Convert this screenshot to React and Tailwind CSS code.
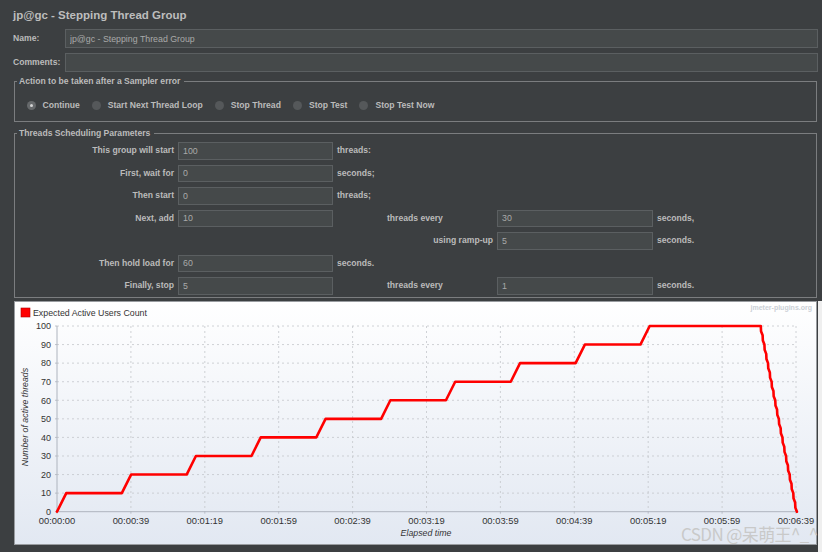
const label = "text-[8.6px] font-bold text-[#bbbbbb] whitespace-nowrap leading-none";

function Field({ value, h = "h-[17.5px]" }) {
  return (
    <input
      readOnly
      value={value}
      className={`block ${h} w-full min-w-0 bg-[#45494a] border border-[#5b5f61] px-[4px] text-[8.8px] text-[#a9a9a9] outline-none`}
    />
  );
}

function Radio({ text, checked }) {
  return (
    <div className="flex items-center gap-[7px]">
      <span
        className={`w-[9px] h-[9px] rounded-full flex items-center justify-center ${
          checked ? "bg-[#66696b]" : "bg-[#55585a]"
        }`}
      >
        {checked && <span className="w-[3px] h-[3px] rounded-full bg-[#d4d4d4]" />}
      </span>
      <span className={label}>{text}</span>
    </div>
  );
}

// chart scale (page coordinates, svg viewBox is aligned to the page)
const X0 = 57;
const X1 = 796;
const Y0 = 510.7;
const YT = 325;
const tx = (t) => X0 + (t * (X1 - X0)) / 399;
const vy = (v) => Y0 - (v * (Y0 - YT)) / 100;

const ticks = [
  "00:00:00", "00:00:39", "00:01:19", "00:01:59", "00:02:39", "00:03:19",
  "00:03:59", "00:04:39", "00:05:19", "00:05:59", "00:06:39",
];

function buildLine() {
  const pts = [[0, 0]];
  for (let k = 1; k <= 10; k++) {
    const s = 35 * (k - 1);
    pts.push([s + 5, 10 * k]);
    if (k < 10) pts.push([s + 35, 10 * k]);
  }
  pts.push([380, 100]);
  for (let i = 0; i < 20; i++) {
    const t = 380 + i * 0.975;
    const v = 100 - 5 * i;
    pts.push([t + 0.12, v - 2.8]);
    pts.push([t + 0.975, v - 5]);
  }
  return pts.map(([t, v]) => `${tx(t).toFixed(2)},${vy(v).toFixed(2)}`).join(" ");
}

function Chart() {
  const font = "Liberation Sans, Arial, sans-serif";
  return (
    <svg width="801" height="242" viewBox="15 301 801 242" className="block">
      <defs>
        <linearGradient id="bg" x1="0" y1="0" x2="0" y2="1">
          <stop offset="0" stopColor="#ffffff" />
          <stop offset="1" stopColor="#e2e8f2" />
        </linearGradient>
      </defs>
      <rect x="15" y="301" width="801" height="242" fill="url(#bg)" />

      {/* legend */}
      <rect x="21" y="307" width="9" height="9" fill="#ff0000" stroke="#b00000" strokeWidth="0.6" />
      <text x="33" y="315" fontSize="8.8" fill="#333" fontFamily={font}>Expected Active Users Count</text>
      <text x="812" y="308.5" fontSize="7" fontWeight="bold" fill="#cbd0d6" textAnchor="end" fontFamily={font}>
        jmeter-plugins.org
      </text>

      {/* grid */}
      {Array.from({ length: 10 }, (_, i) => (
        <line key={"h" + i} x1={X0} x2={X1} y1={vy((i + 1) * 10)} y2={vy((i + 1) * 10)} stroke="#c4c7cc" strokeWidth="0.8" strokeDasharray="2 3" />
      ))}
      {ticks.slice(1).map((_, i) => (
        <line key={"v" + i} x1={X0 + (i + 1) * 73.9} x2={X0 + (i + 1) * 73.9} y1={YT} y2={Y0} stroke="#c4c7cc" strokeWidth="0.8" strokeDasharray="2 3" />
      ))}

      {/* axes */}
      <line x1={X0} x2={X1} y1={Y0} y2={Y0} stroke="#aeb4be" strokeWidth="1" />
      <line x1={X0} x2={X0} y1={YT} y2={Y0} stroke="#aeb4be" strokeWidth="1" />
      {Array.from({ length: 11 }, (_, i) => (
        <g key={"y" + i}>
          <line x1={X0 - 2} x2={X0} y1={vy(i * 10)} y2={vy(i * 10)} stroke="#aeb4be" strokeWidth="0.8" />
          <text x="51" y={vy(i * 10) + 3.3} fontSize="9" fill="#333" textAnchor="end" fontFamily={font}>{i * 10}</text>
        </g>
      ))}
      {ticks.map((t, i) => (
        <g key={"x" + i}>
          <line x1={X0 + i * 73.9} x2={X0 + i * 73.9} y1={Y0} y2={Y0 + 2} stroke="#aeb4be" strokeWidth="0.8" />
          <text x={X0 + i * 73.9} y="522.5" fontSize="9.4" fill="#333" textAnchor="middle" fontFamily={font}>{t}</text>
        </g>
      ))}
      <text x="426" y="534.5" fontSize="8.8" fontStyle="italic" fill="#333" textAnchor="middle" fontFamily={font}>Elapsed time</text>
      <text x="0" y="0" fontSize="8.8" fontStyle="italic" fill="#333" textAnchor="middle" fontFamily={font} transform="translate(28 416) rotate(-90)">
        Number of active threads
      </text>

      <polyline points={buildLine()} fill="none" stroke="#ff0000" strokeWidth="2.6" strokeLinejoin="round" strokeLinecap="round" />
    </svg>
  );
}

export default function App() {
  return (
    <div className="relative w-[822px] h-[552px] overflow-hidden bg-[#3c3f41] flex flex-col font-['Liberation_Sans',Arial,sans-serif]">
      <div className="pl-[13px] pt-[8px] text-[11.5px] leading-[14px] font-bold text-[#bdbdbd]">
        jp@gc - Stepping Thread Group
      </div>

      <div className="flex items-center pl-[13px] pr-[4px] mt-[7px]">
        <span className={`${label} w-[52px]`}>Name:</span>
        <div className="flex-1">
          <Field value="jp@gc - Stepping Thread Group" h="h-[19px]" />
        </div>
      </div>
      <div className="flex items-center pl-[13px] pr-[4px] mt-[5px]">
        <span className={`${label} w-[52px]`}>Comments:</span>
        <div className="flex-1">
          <Field value="" h="h-[19px]" />
        </div>
      </div>

      {/* Action on sampler error */}
      <fieldset className="ml-[14px] mr-[5px] mt-[3px] border border-[#7b7d7f] pt-[12px] pb-[10px]">
        <legend className="ml-[2px] pl-[2px] pr-[4px] text-[8.6px] font-bold text-[#bbbbbb] leading-[12px]">
          Action to be taken after a Sampler error
        </legend>
        <div className="flex items-center h-[12px] gap-[12px] pl-[11.5px]">
          <Radio text="Continue" checked />
          <Radio text="Start Next Thread Loop" />
          <Radio text="Stop Thread" />
          <Radio text="Stop Test" />
          <Radio text="Stop Test Now" />
        </div>
      </fieldset>

      {/* Scheduling */}
      <fieldset className="ml-[14px] mr-[5px] mt-[5px] border border-[#7b7d7f] pt-[3px] pb-[2px]">
        <legend className="ml-[2px] pl-[2px] pr-[4px] text-[8.6px] font-bold text-[#bbbbbb] leading-[12px]">
          Threads Scheduling Parameters
        </legend>
        <div className="grid grid-cols-[159px_155px_46px_106px_156px_1fr] gap-x-[4px] gap-y-[5px] items-center">
          <span className={`${label} text-right`}>This group will start</span>
          <Field value="100" />
          <span className={label}>threads:</span>
          <div />
          <div />
          <div />

          <span className={`${label} text-right`}>First, wait for</span>
          <Field value="0" />
          <span className={label}>seconds;</span>
          <div />
          <div />
          <div />

          <span className={`${label} text-right`}>Then start</span>
          <Field value="0" />
          <span className={label}>threads;</span>
          <div />
          <div />
          <div />

          <span className={`${label} text-right`}>Next, add</span>
          <Field value="10" />
          <div />
          <span className={label}>threads every</span>
          <Field value="30" />
          <span className={label}>seconds,</span>

          <div />
          <div className="h-[17.5px]" />
          <div />
          <span className={`${label} text-right`}>using ramp-up</span>
          <Field value="5" />
          <span className={label}>seconds.</span>

          <span className={`${label} text-right`}>Then hold load for</span>
          <Field value="60" />
          <span className={label}>seconds.</span>
          <div />
          <div />
          <div />

          <span className={`${label} text-right`}>Finally, stop</span>
          <Field value="5" />
          <div />
          <span className={label}>threads every</span>
          <Field value="1" />
          <span className={label}>seconds.</span>
        </div>
      </fieldset>

      {/* Chart */}
      <div className="flex flex-1 mt-[3px]">
        <div className="ml-[14px] w-[803px] h-[244px] border border-[#999ca0]">
          <Chart />
        </div>
        <div className="ml-[1px] w-[4px] bg-[#efefef]" />
      </div>

      <div className="absolute left-[681px] top-[525px] text-[17px] leading-none tracking-[-0.6px] text-[#c9c9c9] font-['Noto_Sans_CJK_SC',sans-serif] whitespace-nowrap">
        CSDN @呆萌王^_^
      </div>
    </div>
  );
}
